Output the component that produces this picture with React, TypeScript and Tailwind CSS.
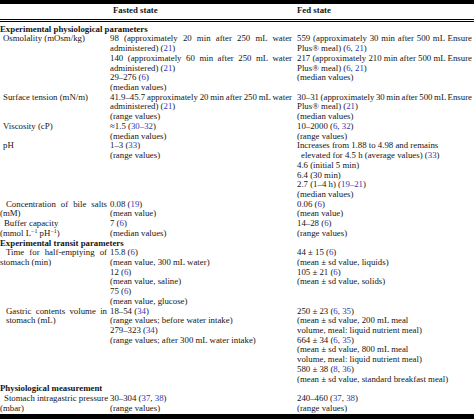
import React from "react";

type Ln = { t: React.ReactNode; cls?: string };

const J = "text-justify [text-align-last:justify]";

// text with {n} marks blue reference numbers
function Refs({ s }: { s: string }) {
  const parts = s.split(/\{([^}]+)\}/);
  return (
    <>
      {parts.map((p, i) =>
        i % 2 === 1 ? (
          <span key={i} className="text-[#3535b8]">
            {p}
          </span>
        ) : (
          <React.Fragment key={i}>{p}</React.Fragment>
        ),
      )}
    </>
  );
}

const l = (s: string, cls?: string): Ln => ({ t: <Refs s={s} />, cls });

type Row =
  | { kind: "section"; title: string }
  | { kind: "row"; label: Ln[]; fasted: Ln[]; fed: Ln[] };

const rows: Row[] = [
  { kind: "section", title: "Experimental physiological parameters" },
  {
    kind: "row",
    label: [l("Osmolality (mOsm/kg)", "pl-[3px]")],
    fasted: [
      l("98 (approximately 20 min after 250 mL water", J),
      l("administered) ({21})"),
      l("140 (approximately 60 min after 250 mL water", J),
      l("administered) ({21})"),
      l("29–276 ({6})"),
      l("(median values)"),
    ],
    fed: [
      l("559 (approximately 30 min after 500 mL Ensure", J),
      l("Plus® meal) ({6}, {21})"),
      l("217 (approximately 210 min after 500 mL Ensure", J + " [word-spacing:-0.6px]"),
      l("Plus® meal) ({6}, {21})"),
      l("(median values)"),
    ],
  },
  {
    kind: "row",
    label: [l("Surface tension (mN/m)", "pl-[3px]")],
    fasted: [
      l("41.9–45.7 approximately 20 min after 250 mL water", J + " [word-spacing:-1px]"),
      l("administered) ({21})"),
      l("(range values)"),
    ],
    fed: [
      l("30–31 (approximately 30 min after 500 mL Ensure", J + " [word-spacing:-0.8px]"),
      l("Plus® meal) ({21})"),
      l("(median values)"),
    ],
  },
  {
    kind: "row",
    label: [l("Viscosity (cP)", "pl-[3px]")],
    fasted: [l("≈1.5 ({30–32})"), l("(median values)")],
    fed: [l("10–2000 ({6}, {32})"), l("(range values)")],
  },
  {
    kind: "row",
    label: [l("pH", "pl-[3px]")],
    fasted: [l("1–3 ({33})"), l("(range values)")],
    fed: [
      l("Increases from 1.88 to 4.98 and remains"),
      l("elevated for 4.5 h (average values) ({33})", "pl-[4px]"),
      l("4.6 (initial 5 min)"),
      l("6.4 (30 min)"),
      l("2.7 (1–4 h) ({19–21})"),
      l("(median values)"),
    ],
  },
  {
    kind: "row",
    label: [l("Concentration of bile salts", J + " pl-[6px]"), l("(mM)")],
    fasted: [l("0.08 ({19})"), l("(mean value)")],
    fed: [l("0.06 ({6})"), l("(mean value)")],
  },
  {
    kind: "row",
    label: [
      l("Buffer capacity", "pl-[4px]"),
      {
        t: (
          <>
            (mmol L<sup className="text-[6px]">−1</sup> pH
            <sup className="text-[6px]">−1</sup>)
          </>
        ),
      },
    ],
    fasted: [l("7 ({6})"), l("(median values)")],
    fed: [l("14–28 ({6})"), l("(range values)")],
  },
  { kind: "section", title: "Experimental transit parameters" },
  {
    kind: "row",
    label: [l("Time for half-emptying of", J + " pl-[6px]"), l("stomach (min)")],
    fasted: [
      l("15.8 ({6})"),
      l("(mean value, 300 mL water)"),
      l("12 ({6})"),
      l("(mean value, saline)"),
      l("75 ({6})"),
      l("(mean value, glucose)"),
    ],
    fed: [
      l("44 ± 15 ({6})"),
      l("(mean ± sd value, liquids)"),
      l("105 ± 21 ({6})"),
      l("(mean ± sd value, solids)"),
    ],
  },
  {
    kind: "row",
    label: [
      l("Gastric contents volume in", J + " pl-[6px]"),
      l("stomach (mL)", "pl-[6px]"),
    ],
    fasted: [
      l("18–54 ({34})"),
      l("(range values; before water intake)"),
      l("279–323 ({34})"),
      l("(range values; after 300 mL water intake)"),
    ],
    fed: [
      l("250 ± 23 ({6}, {35})"),
      l("(mean ± sd value, 200 mL meal"),
      l("volume, meal: liquid nutrient meal)"),
      l("664 ± 34 ({6}, {35})"),
      l("(mean ± sd value, 800 mL meal"),
      l("volume, meal: liquid nutrient meal)"),
      l("580 ± 38 ({8}, {36})"),
      l("(mean ± sd value, standard breakfast meal)"),
    ],
  },
  { kind: "section", title: "Physiological measurement" },
  {
    kind: "row",
    label: [l("Stomach intragastric pressure", J + " pl-[4px]"), l("(mbar)")],
    fasted: [l("30–304 ({37}, {38})"), l("(range values)")],
    fed: [l("240–460 ({37}, {38})"), l("(range values)")],
  },
];

function Lines({ lines, className }: { lines: Ln[]; className?: string }) {
  return (
    <div className={className}>
      {lines.map((ln, i) => (
        <div key={i} className={"whitespace-nowrap " + (ln.cls ?? "")}>
          {ln.t}
        </div>
      ))}
    </div>
  );
}

export default function App() {
  return (
    <div
      className="w-[474px] h-[419px] overflow-hidden bg-white text-[#151515] text-[8.8px] leading-[9.72px] flex flex-col"
      style={{ fontFamily: '"Liberation Serif", "Times New Roman", serif' }}
    >
      <div className="h-[4px] bg-black shrink-0" />

      <div className="grid grid-cols-[110px_187px_1fr] pt-[2px] pb-[3px] font-bold">
        <div />
        <div className="pl-[3px]">Fasted state</div>
        <div>Fed state</div>
      </div>
      <div className="h-[3px] border-y border-black shrink-0" />

      <div className="pt-[3px]">
        {rows.map((row, i) =>
          row.kind === "section" ? (
            <div key={i} className="font-bold whitespace-nowrap">
              {row.title}
            </div>
          ) : (
            <div key={i} className="grid grid-cols-[110px_187px_1fr]">
              <Lines lines={row.label} className="pr-[3px]" />
              <Lines lines={row.fasted} className="pr-[5px]" />
              <Lines lines={row.fed} className="pr-[2px]" />
            </div>
          ),
        )}
      </div>

      <div className="flex-1 min-h-[6px] bg-black mt-[1px]" />
    </div>
  );
}
